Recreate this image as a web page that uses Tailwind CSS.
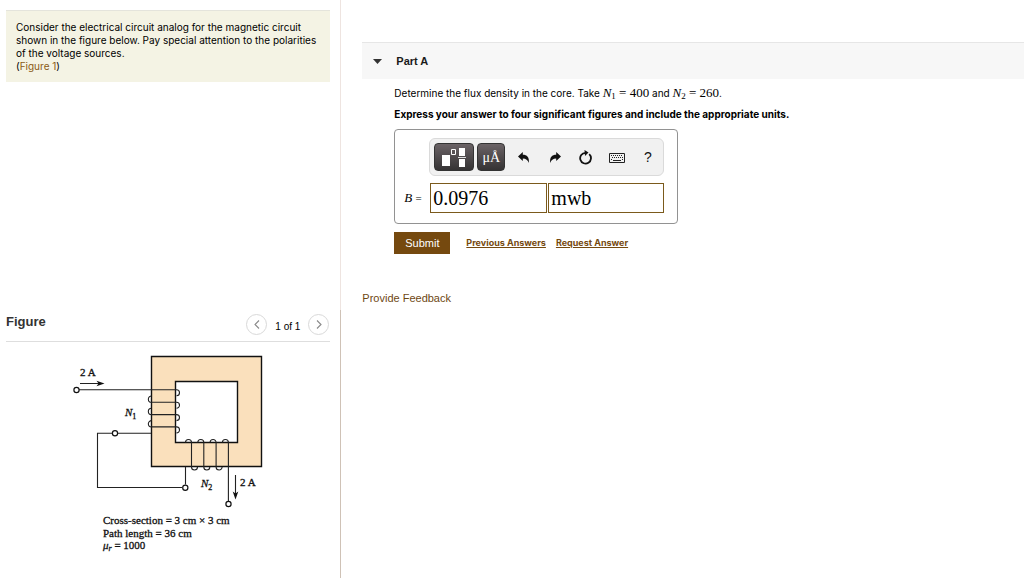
<!DOCTYPE html>
<html lang="en">
<head>
<meta charset="utf-8">
<meta name="viewport" content="width=device-width, initial-scale=1">
<title>Magnetic circuit – Part A</title>
<script src="https://cdn.jsdelivr.net/npm/@tailwindcss/browser@4"></script>
</head>
<body class="flex min-h-screen bg-white font-['Liberation_Sans',Arial,sans-serif] text-[10px] leading-[13px] text-black">

<aside class="flex w-1/3 shrink-0 flex-col">
  <div class="min-h-[310px] border-r border-[#eee4e0] pt-[10px] pr-[10px] pl-1.5">
    <div class="border-t border-[#e4e4dc] bg-[#f4f3e4] px-[10px] pt-[10px] pb-[9px] font-['Inter','Liberation_Sans',sans-serif]">
      <p>Consider the electrical circuit analog for the magnetic circuit shown in the figure below. Pay special attention to the polarities of the voltage sources.</p>
      <p>(<a href="#figure" class="text-[#8a5a14]">Figure 1</a>)</p>
    </div>
  </div>

  <section id="figure" class="grow border-r border-[#cfc2b6] pr-[10px] pl-1.5">
    <header class="flex items-start justify-between border-b border-[#dedede] pt-1 pb-1.5">
      <h2 class="text-[13px] leading-4 font-bold text-[#333]">Figure</h2>
      <nav class="mr-px flex items-center gap-2" aria-label="Figure pages">
        <button type="button" aria-label="Previous figure" class="flex size-[21px] items-center justify-center rounded-full border border-[#d9d9d9]">
          <svg class="h-[9px] w-[6px]" viewBox="0 0 6 9" fill="none" stroke="#8a8a8a" stroke-width="1.1"><path d="M5 .5 1 4.500 5 8.500"/></svg>
        </button>
        <span class="pt-1">1 of 1</span>
        <button type="button" aria-label="Next figure" class="flex size-[21px] items-center justify-center rounded-full border border-[#d9d9d9]">
          <svg class="h-[9px] w-[6px]" viewBox="0 0 6 9" fill="none" stroke="#8a8a8a" stroke-width="1.1"><path d="M1 .5 5 4.500 1 8.500"/></svg>
        </button>
      </nav>
    </header>
    <svg class="mt-[3px] ml-[54px] h-[215px] w-[220px]" viewBox="60 345 220 215" role="img" aria-label="Magnetic core with two windings" font-family="'Liberation Serif', 'Times New Roman', serif" font-size="11" fill="#111" stroke-linecap="butt">
      <path d="M151.500 356.500h110v110h-110zM175.500 381.500v61h62v-61z" fill="#fae0bc" fill-rule="evenodd" stroke="#111" stroke-width="1.400"/>
      <g fill="none" stroke="#222" stroke-width="1.100">
        <path d="M79 389.800H176.500a3 3 0 0 1 0 6"/>
        <path d="M151.500 396a3 3 0 0 0 0 6.300H176.500a3 3 0 0 1 0 6"/>
        <path d="M151.500 408.300a3 3 0 0 0 0 6.300H176.500a3 3 0 0 1 0 6"/>
        <path d="M151.500 420.600a3 3 0 0 0 0 6.300H176.500a3 3 0 0 1 0 6"/>
        <path d="M151 433.300H118M112 433.300H97.500V487.500H182M185.500 484.500V467"/>
        <path d="M185.500 442.500a3 3 0 0 1 6 0V467a3 3 0 0 0 6 0"/>
        <path d="M197.800 442.500a3 3 0 0 1 6 0V467a3 3 0 0 0 6 0"/>
        <path d="M210.100 442.500a3 3 0 0 1 6 0V467a3 3 0 0 0 6 0"/>
        <path d="M222.400 442.500a3 3 0 0 1 6 0V501"/>
        <path d="M80 383.500H100M235.500 475V494"/>
      </g>
      <path d="M104.500 383.500l-8-2.800 2 2.800-2 2.800zM235.500 499.500l-2.800-8 2.800 2 2.800-2z"/>
      <g fill="#fff" stroke="#111" stroke-width="1.200">
        <circle cx="76.500" cy="390" r="2.600"/><circle cx="115" cy="433.300" r="2.600"/><circle cx="185.300" cy="487.700" r="2.600"/><circle cx="228.500" cy="504" r="2.600"/>
      </g>
      <g stroke="#111" stroke-width="0.300">
      <text x="80" y="376">2 A</text>
      <text x="125" y="416" font-style="italic">N<tspan font-size="8" dy="3" font-style="normal">1</tspan></text>
      <text x="201" y="487" font-style="italic">N<tspan font-size="8" dy="3" font-style="normal">2</tspan></text>
      <text x="240" y="486">2 A</text>
      <text x="103" y="524">Cross-section = 3 cm × 3 cm</text>
      <text x="103" y="537">Path length = 36 cm</text>
      <text x="103" y="549"><tspan font-style="italic">μ</tspan><tspan font-style="italic" font-size="8" dy="2">r</tspan><tspan dy="-2"> = 1000</tspan></text>
      </g>
    </svg>
  </section>
</aside>

<main class="min-w-0 grow pt-[42px] pl-[21px]">
  <header class="flex h-[37px] items-center gap-3.5 border-t border-[#e6e6e6] bg-[#f7f7f7] pl-[11px]">
    <button type="button" aria-label="Collapse Part A" class="flex"><svg class="h-[5px] w-[9px]" viewBox="0 0 9 5"><path d="M0 0h9L4.500 5z" fill="#333"/></svg></button>
    <h2 class="text-[11px] font-bold text-[#1a1a1a]">Part A</h2>
  </header>

  <form class="pt-[7px] pl-8 font-['Inter','Liberation_Sans',sans-serif]" onsubmit="return false">
    <p>Determine the flux density in the core. Take <span class="font-['Liberation_Serif',serif] text-[13px]"><i>N</i><sub class="text-[9px]">1</sub> = 400</span> and <span class="font-['Liberation_Serif',serif] text-[13px]"><i>N</i><sub class="text-[9px]">2</sub> = 260</span>.</p>
    <p class="mt-2 font-bold">Express your answer to four significant figures and include the appropriate units.</p>

    <div class="mt-2 w-fit rounded border border-[#929292] pt-2 pr-[13px] pb-[10px] pl-[9px]">
      <div class="ml-[25px] flex h-[38px] items-center rounded-md border border-[#dadada] bg-[#f1f1f1] pl-1" role="toolbar" aria-label="Equation tools">
        <button type="button" aria-label="Templates" class="mr-[3px] flex h-7 w-10 items-center justify-center rounded border border-[#333] bg-linear-to-b from-[#6b6366] to-[#353334]">
          <svg class="h-6 w-6" viewBox="0 0 24 24"><path d="M0 10h8v11H0zM17 3h6v8h-6zM17 14h6v8h-6z" fill="#fff"/><path d="M9.500 4.500h4v5h-4z" fill="none" stroke="#fff"/><path d="M16 12.500h8" stroke="#ddd"/></svg>
        </button>
        <button type="button" aria-label="Units" class="mr-[3px] flex h-7 w-7 items-center justify-center rounded border border-[#333] bg-linear-to-b from-[#6b6366] to-[#353334] font-['Liberation_Serif',serif] text-[14px] text-white">μÅ</button>
        <button type="button" aria-label="Undo" class="flex h-7 w-[31px] items-center justify-center"><svg class="h-[11px] w-3" viewBox="0 0 12 11"><path d="M0 4.500 4.800 0v2.700C9 2.700 11.500 5 10.800 11 9.800 8 8 6.500 4.800 6.500V9z" fill="#111"/></svg></button>
        <button type="button" aria-label="Redo" class="flex h-7 w-[31px] items-center justify-center"><svg class="h-[11px] w-3" viewBox="0 0 12 11"><path d="M12 4.500 7.200 0v2.700C3 2.700.5 5 1.200 11 2.200 8 4 6.500 7.200 6.500V9z" fill="#111"/></svg></button>
        <button type="button" aria-label="Reset" class="flex h-7 w-[31px] items-center justify-center"><svg class="h-[15px] w-3.5" viewBox="0 0 14 15"><path d="M10.200 4.200A5.400 5.400 0 1 1 6.500 2.800" fill="none" stroke="#111" stroke-width="1.800"/><path d="M5.500 0 9.500 2.600 6 6z" fill="#111"/></svg></button>
        <button type="button" aria-label="Keyboard" class="flex h-7 w-[31px] items-center justify-center"><svg class="mt-0.5 h-[10px] w-4" viewBox="0 0 16 10" fill="none" stroke="#222"><path d="M.5.500h15v9H.5z"/><path d="M2 2.500h12M3 4.500h11M2 6.500h1M13 6.500h1" stroke-dasharray="1 1"/><path d="M4 7.500h8"/></svg></button>
        <button type="button" aria-label="Help" class="flex h-7 w-[31px] items-center justify-center font-['Liberation_Sans',sans-serif] text-[14px] text-[#111]">?</button>
      </div>
      <div class="mt-[7px] flex items-center">
        <label for="value" class="w-[26px] font-['Liberation_Serif',serif] text-[13px]"><i>B</i> <span class="text-[11px]">=</span></label>
        <input id="value" type="text" value="0.0976" class="h-[30px] w-[117px] border border-[#7b5a1c] bg-white px-0.5 font-['Liberation_Serif',serif] text-[20px]">
        <input type="text" aria-label="Units" value="mwb" class="ml-px h-[30px] w-[116px] border border-[#7b5a1c] bg-white px-0.5 font-['Liberation_Serif',serif] text-[20px]">
      </div>
    </div>

    <div class="mt-2 flex items-center text-[9px] font-bold">
      <button type="submit" class="mr-4 h-[22px] w-14 bg-[#75490f] font-['Liberation_Sans',sans-serif] text-[11px] font-normal text-white">Submit</button>
      <span class="flex gap-[10px] pb-0.5">
        <a href="#previous" class="text-[#75490f] underline">Previous Answers</a>
        <a href="#request" class="text-[#75490f] underline">Request Answer</a>
      </span>
    </div>
  </form>

  <a href="#feedback" class="mt-[38px] inline-block text-[11px] text-[#6e4712]">Provide Feedback</a>
</main>
</body>
</html>
